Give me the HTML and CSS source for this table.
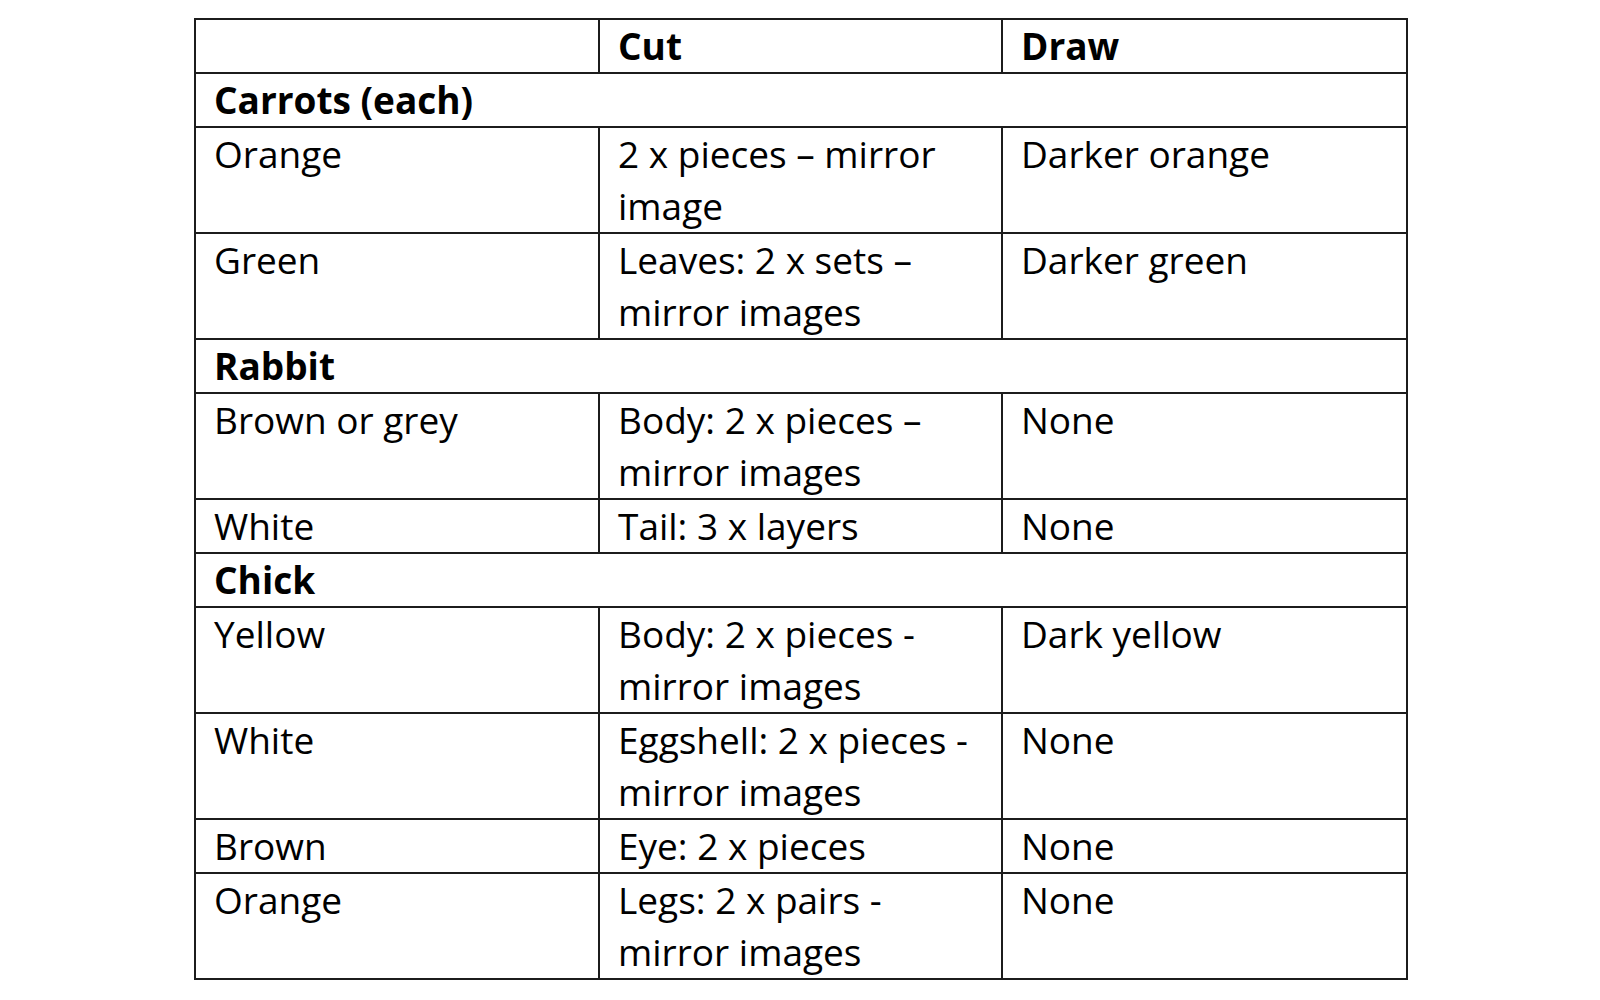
FILE: index.html
```html
<!DOCTYPE html>
<html lang="en">
<head>
<meta charset="utf-8">
<title>Materials</title>
<link rel="stylesheet" href="styles.css">
</head>
<body>
<table class="materials">
  <colgroup>
    <col class="c1"><col class="c2"><col class="c3">
  </colgroup>
  <tr class="head"><td></td><td>Cut</td><td>Draw</td></tr>
  <tr class="group"><td colspan="3">Carrots (each)</td></tr>
  <tr><td>Orange</td><td>2 x pieces – mirror image</td><td>Darker orange</td></tr>
  <tr><td>Green</td><td>Leaves: 2 x sets – mirror images</td><td>Darker green</td></tr>
  <tr class="group"><td colspan="3">Rabbit</td></tr>
  <tr><td>Brown or grey</td><td>Body: 2 x pieces – mirror images</td><td>None</td></tr>
  <tr><td>White</td><td>Tail: 3 x layers</td><td>None</td></tr>
  <tr class="group"><td colspan="3">Chick</td></tr>
  <tr><td>Yellow</td><td>Body: 2 x pieces - mirror images</td><td>Dark yellow</td></tr>
  <tr><td>White</td><td>Eggshell: 2 x pieces - mirror images</td><td>None</td></tr>
  <tr><td>Brown</td><td>Eye: 2 x pieces</td><td>None</td></tr>
  <tr><td>Orange</td><td>Legs: 2 x pairs - mirror images</td><td>None</td></tr>
</table>
</body>
</html>
```
FILE: styles.css
```css
html, body {
  margin: 0;
  padding: 0;
  background: #ffffff;
}
body {
  padding: 18px 0 0 194px;
  font-family: "Open Sans", Lato, "Liberation Sans", sans-serif;
  font-size: 37px;
  color: #000;
}
.materials {
  border-collapse: collapse;
  table-layout: fixed;
  width: 1212px;
  border: 2px solid #000;
}
.materials .c1 { width: 404px; }
.materials .c2 { width: 403px; }
.materials .c3 { width: 405px; }
.materials td {
  border: 2px solid #1c1c1c;
  padding: 0 5px 0 18px;
  line-height: 52px;
  vertical-align: top;
}
.materials .head td,
.materials .group td {
  font-weight: 700;
}
```
